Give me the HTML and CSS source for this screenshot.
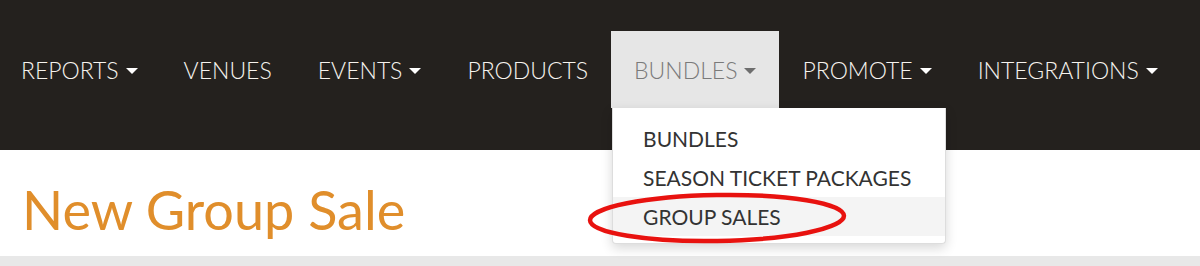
FILE: index.html
```html
<!DOCTYPE html>
<html lang="en">
<head>
    <meta charset="UTF-8">
    <meta name="viewport" content="width=device-width, initial-scale=1.0">
    <title>New Group Sale</title>
    <link rel="stylesheet" href="styles.css">
</head>
<body>
    <nav class="navbar">
        <ul class="nav">
            <li class="nav-item">REPORTS <span class="caret"></span></li>
            <li class="nav-item">VENUES</li>
            <li class="nav-item">EVENTS <span class="caret"></span></li>
            <li class="nav-item">PRODUCTS</li>
            <li class="nav-item open">BUNDLES <span class="caret"></span>
                <ul class="dropdown">
                    <li>BUNDLES</li>
                    <li>SEASON TICKET PACKAGES</li>
                    <li class="active">GROUP SALES</li>
                </ul>
                <svg class="circle-mark" width="270" height="60" viewBox="0 0 270 60">
                    <ellipse cx="133" cy="30" rx="127" ry="23" fill="none" stroke="#e8120f" stroke-width="4.5" transform="rotate(-1 133 30)"/>
                </svg>
            </li>
            <li class="nav-item">PROMOTE <span class="caret"></span></li>
            <li class="nav-item">INTEGRATIONS <span class="caret"></span></li>
        </ul>
    </nav>
    <div class="page-head">
        <h1>New Group Sale</h1>
    </div>
    <div class="page-body"></div>
</body>
</html>
```

FILE: styles.css
```css
body {
    margin: 0;
    font-family: Lato, "Open Sans", sans-serif;
    background-color: #fff;
}

.navbar {
    background-color: #24211e;
    height: 150px;
    padding-top: 31px;
    box-sizing: border-box;
}

.nav {
    display: flex;
    margin: 0;
    padding: 0;
    list-style: none;
}

.nav-item {
    position: relative;
    display: flex;
    align-items: center;
    gap: 7px;
    height: 77px;
    padding: 0 23px;
    font-size: 23px;
    font-weight: 300;
    color: #f6f3ee;
    white-space: nowrap;
}

.nav-item:first-child {
    padding-left: 21px;
}

.nav-item.open {
    background-color: #e6e6e6;
    color: #7a7a7a;
}

.caret {
    display: inline-block;
    width: 0;
    height: 0;
    margin-top: 2px;
    border-left: 6px solid transparent;
    border-right: 6px solid transparent;
    border-top: 6px solid #fff;
}

.open .caret {
    border-top-color: #6e6e6e;
}

.dropdown {
    position: absolute;
    top: 77px;
    left: 1px;
    width: 334px;
    box-sizing: border-box;
    margin: 0;
    padding: 11px 0 7px;
    list-style: none;
    background-color: #fff;
    border: 1px solid #ddd;
    border-top: none;
    border-radius: 0 0 4px 4px;
    box-shadow: 0 4px 12px rgba(0, 0, 0, 0.16);
    z-index: 2;
}

.dropdown li {
    height: 39px;
    line-height: 39px;
    padding: 0 30px;
    font-size: 21px;
    font-weight: 400;
    color: #333;
}

.dropdown li.active {
    background-color: #f4f4f4;
}

.circle-mark {
    position: absolute;
    top: 157px;
    left: -27px;
    z-index: 3;
}

.page-head {
    height: 106px;
    padding: 0 22px;
}

.page-head h1 {
    margin: 0;
    padding-top: 28px;
    font-size: 54px;
    font-weight: 400;
    color: #e08e2b;
    line-height: 64px;
}

.page-body {
    height: 10px;
    background-color: #e8e8e8;
}
```
